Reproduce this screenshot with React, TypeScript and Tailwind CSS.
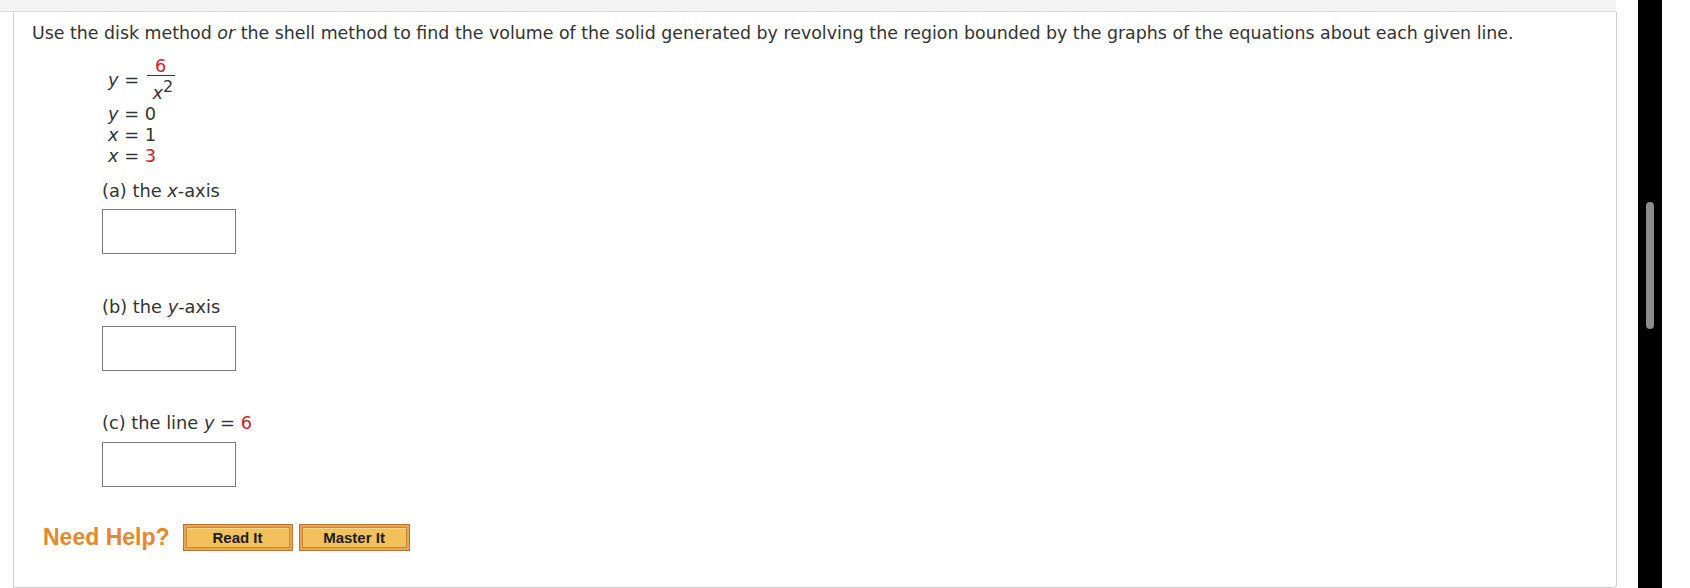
import React from 'react';

const Red: React.FC<{ children: React.ReactNode }> = ({ children }) => (
  <span className="text-[#d0201c]">{children}</span>
);

const Var: React.FC<{ children: React.ReactNode }> = ({ children }) => <i className="italic">{children}</i>;

const AnswerBox = () => (
  <div className="w-[134px] h-[45px] border border-[#7b7b7b] bg-white" />
);

const HelpButton: React.FC<{ label: string; width: string }> = ({ label, width }) => (
  <div className={`${width} h-[27px] border border-[#b5763a] bg-[#eba44c] p-[2px]`}>
    <div className="h-full border border-[#c8873f] bg-[#f3c15c] flex items-center justify-center shadow-[inset_0_1px_0_#f8d98c]">
      <span className="font-['Liberation_Sans',Arial,sans-serif] font-bold text-[15px] text-[#1c1c1c] leading-none">
        {label}
      </span>
    </div>
  </div>
);

export default function App() {
  return (
    <div className="w-[1690px] h-[588px] flex bg-white overflow-hidden font-['DejaVu_Sans',Verdana,sans-serif] text-[#333]">
      <div className="w-[1638px] flex flex-col">
        <div className="h-[12px] bg-[#f4f4f4] border-b border-[#dcdcdc] mr-[22px] shrink-0" />
        <div className="flex-1 ml-[13px] mr-[21px] border-l border-r border-b border-[#cfcfcf] rounded-br-[4px] pl-[18px] pt-[11px]">
          <p className="text-[17.4px] leading-[20px]">
            Use the disk method <Var>or</Var> the shell method to find the volume of the solid generated by revolving the
            region bounded by the graphs of the equations about each given line.
          </p>

          <div className="ml-[76px] mt-[14px] text-[17.8px]">
            <div className="flex items-center">
              <span>
                <Var>y</Var> =&nbsp;
              </span>
              <span className="inline-flex flex-col items-center ml-[2px]">
                <span className="leading-[18px] px-[3px]">
                  <Red>6</Red>
                </span>
                <span className="w-[28px] h-px bg-[#333]" />
                <span className="leading-[20px] pt-[7px] pl-[4px]">
                  <Var>x</Var>
                  <sup className="text-[16px] top-[-0.45em]">2</sup>
                </span>
              </span>
            </div>
            <div className="leading-[21px]">
              <Var>y</Var> = 0
            </div>
            <div className="leading-[21px]">
              <Var>x</Var> = 1
            </div>
            <div className="leading-[21px]">
              <Var>x</Var> = <Red>3</Red>
            </div>
          </div>

          <div className="ml-[70px] text-[17.8px]">
            <div className="leading-[20px] mt-[15px]">
              (a) the <Var>x</Var>-axis
            </div>
            <div className="mt-[8px]">
              <AnswerBox />
            </div>
            <div className="leading-[20px] mt-[43px]">
              (b) the <Var>y</Var>-axis
            </div>
            <div className="mt-[9px]">
              <AnswerBox />
            </div>
            <div className="leading-[20px] mt-[42px]">
              (c) the line <Var>y</Var> = <Red>6</Red>
            </div>
            <div className="mt-[9px]">
              <AnswerBox />
            </div>
          </div>

          <div className="flex items-center mt-[37px] ml-[11px]">
            <span className="font-['Liberation_Sans',Arial,sans-serif] font-bold text-[23px] text-[#e5882c] leading-none mr-[13px]">
              Need Help?
            </span>
            <HelpButton label="Read It" width="w-[110px]" />
            <div className="w-[6px]" />
            <HelpButton label="Master It" width="w-[111px]" />
          </div>
        </div>
      </div>
      <div className="w-[24px] bg-black flex justify-center shrink-0">
        <div className="w-[8px] h-[127px] mt-[202px] rounded-full bg-[#8c8c8c]" />
      </div>
      <div className="flex-1 bg-white" />
    </div>
  );
}
